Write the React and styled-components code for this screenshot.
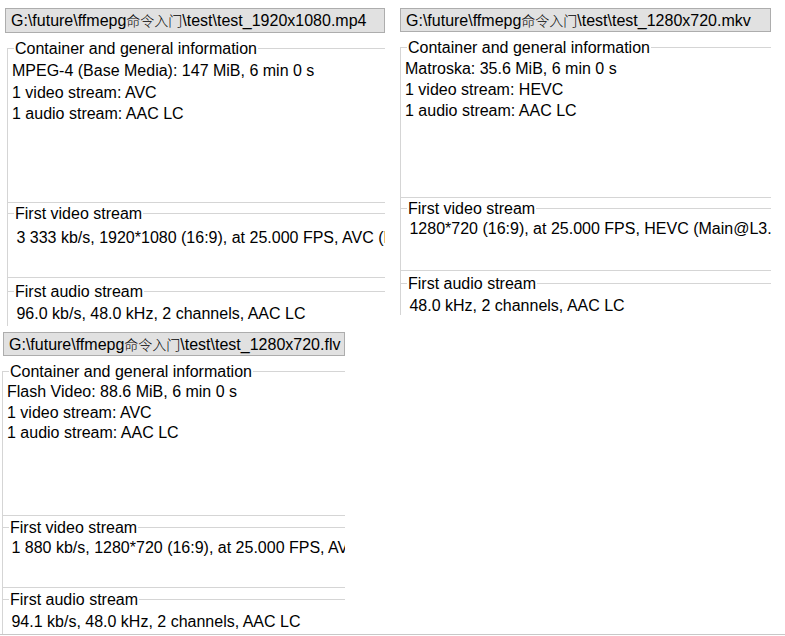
import styled, { createGlobalStyle } from "styled-components"

const GlobalStyle = createGlobalStyle`
    html, body {
        margin: 0;
        padding: 0;
        background: #fff;
    }
    body {
        font-family: "Liberation Sans", Arial, "Noto Sans CJK SC", sans-serif;
        font-size: 16px;
        color: #000;
    }
`

const Screen = styled.div`
    width: 785px;
    height: 634px;
    border-bottom: 1px solid #c8c8c8;
    overflow: hidden;
    display: flex;
    flex-direction: column;
`

const TopRow = styled.div`
    display: flex;
    gap: 15px;
    align-items: flex-start;
`

const Panel = styled.section`
    width: ${p => p.$width}px;
    height: ${p => p.$height}px;
    flex-shrink: 0;
    overflow: hidden;
    display: flex;
    flex-direction: column;
`

const PathBar = styled.div`
    margin-top: ${p => p.$top}px;
    margin-left: ${p => p.$indent}px;
    height: ${p => p.$h}px;
    box-sizing: border-box;
    background: #e1e1e1;
    border: 1px solid #adadad;
    padding-left: 5px;
    line-height: ${p => p.$h - 2}px;
    white-space: nowrap;
    overflow: hidden;
    flex-shrink: 0;
`

const Cjk = styled.span`
    font-family: "Noto Sans CJK SC", sans-serif;
    font-size: 14px;
    font-weight: 300;
`

const Body = styled.div`
    flex: 1;
    margin-top: ${p => p.$top}px;
    margin-left: ${p => p.$indent}px;
    border-left: 1px solid #d5d5d5;
`

const Group = styled.div`
    width: calc(100% + 20px);
    height: ${p => (p.$h ? p.$h + "px" : "auto")};
    box-sizing: border-box;
    margin-top: ${p => p.$gap}px;
    border-top: 1px solid #d5d5d5;
    border-bottom: ${p => (p.$h ? "1px solid #d5d5d5" : "none")};
`

const Legend = styled.div`
    display: table;
    margin: -9px 0 0 6px;
    padding: 0 1px;
    background: #fff;
    line-height: 18px;
    white-space: nowrap;
`

const Lines = styled.div`
    padding-top: ${p => p.$top}px;
    padding-left: 4px;
`

const Line = styled.div`
    white-space: pre;
    line-height: ${p => p.$lh}px;
`

const panels = [
    {
        key: "mp4",
        width: 385,
        height: 326,
        headerTop: 8,
        headerLeft: 5,
        headerH: 25,
        bodyTop: 15,
        bodyLeft: 7,
        lineH: 21.5,
        dir: "G:\\future\\ffmepg",
        cjk: "命令入门",
        name: "\\test\\test_1920x1080.mp4",
        groups: [
            { title: "Container and general information", h: 155, gap: 0, pad: 2, lines: ["MPEG-4 (Base Media): 147 MiB, 6 min 0 s", "1 video stream: AVC", "1 audio stream: AAC LC"] },
            { title: "First video stream", h: 65, gap: 10, pad: 4, lines: [" 3 333 kb/s, 1920*1080 (16:9), at 25.000 FPS, AVC (Main@L4)"] },
            { title: "First audio stream", gap: 13, pad: 2, lines: [" 96.0 kb/s, 48.0 kHz, 2 channels, AAC LC"] },
        ],
    },
    {
        key: "mkv",
        width: 371,
        height: 315,
        headerTop: 8,
        headerLeft: 0,
        headerH: 24,
        bodyTop: 15,
        bodyLeft: 0,
        lineH: 21,
        dir: "G:\\future\\ffmepg",
        cjk: "命令入门",
        name: "\\test\\test_1280x720.mkv",
        groups: [
            { title: "Container and general information", h: 151, gap: 0, pad: 1, lines: ["Matroska: 35.6 MiB, 6 min 0 s", "1 video stream: HEVC", "1 audio stream: AAC LC"] },
            { title: "First video stream", h: 63, gap: 10, pad: 0, lines: [" 1280*720 (16:9), at 25.000 FPS, HEVC (Main@L3.1@Main)"] },
            { title: "First audio stream", gap: 12, pad: 2, lines: [" 48.0 kHz, 2 channels, AAC LC"] },
        ],
    },
    {
        key: "flv",
        width: 345,
        height: 308,
        headerTop: 6,
        headerLeft: 3,
        headerH: 24,
        bodyTop: 15,
        bodyLeft: 2,
        lineH: 20.5,
        dir: "G:\\future\\ffmepg",
        cjk: "命令入门",
        name: "\\test\\test_1280x720.flv",
        groups: [
            { title: "Container and general information", h: 145, gap: 0, pad: 1, lines: ["Flash Video: 88.6 MiB, 6 min 0 s", "1 video stream: AVC", "1 audio stream: AAC LC"] },
            { title: "First video stream", h: 61, gap: 11, pad: 1, lines: [" 1 880 kb/s, 1280*720 (16:9), at 25.000 FPS, AVC (High@L3.1)"] },
            { title: "First audio stream", gap: 11, pad: 3, lines: [" 94.1 kb/s, 48.0 kHz, 2 channels, AAC LC"] },
        ],
    },
]

const MediaPanel = ({ data }) => (
    <Panel $width={data.width} $height={data.height}>
        <PathBar $top={data.headerTop} $indent={data.headerLeft} $h={data.headerH}>
            {data.dir}<Cjk>{data.cjk}</Cjk>{data.name}
        </PathBar>
        <Body $top={data.bodyTop} $indent={data.bodyLeft}>
            {data.groups.map(g => (
                <Group key={g.title} $h={g.h} $gap={g.gap}>
                    <Legend>{g.title}</Legend>
                    <Lines $top={g.pad}>
                        {g.lines.map(l => (
                            <Line key={l} $lh={data.lineH}>{l}</Line>
                        ))}
                    </Lines>
                </Group>
            ))}
        </Body>
    </Panel>
)

const App = () => {
    return (
        <Screen>
            <GlobalStyle />
            <TopRow>
                <MediaPanel data={panels[0]} />
                <MediaPanel data={panels[1]} />
            </TopRow>
            <MediaPanel data={panels[2]} />
        </Screen>
    )
}

export default App
